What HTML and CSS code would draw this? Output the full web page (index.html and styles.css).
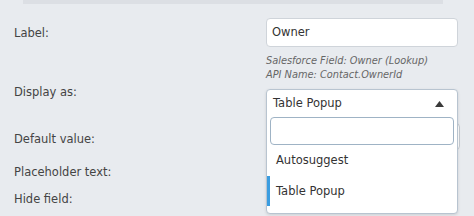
FILE: index.html
```html
<!DOCTYPE html>
<html>
<head>
<meta charset="utf-8">
<link rel="stylesheet" href="styles.css">
</head>
<body>
<div class="topbar"></div>
<div class="form">
  <div class="row r1">
    <div class="lbl">Label:</div>
    <div class="ctl">
      <div class="text-input">Owner</div>
      <div class="help">Salesforce Field: Owner (Lookup)<br>API Name: Contact.OwnerId</div>
    </div>
  </div>
  <div class="row r2">
    <div class="lbl">Display as:</div>
    <div class="ctl">
      <div class="select">
        <div class="panel">
          <div class="sel-head">
            <span>Table Popup</span>
            <svg class="caret" width="9" height="6" viewBox="0 0 9 6"><path d="M0 6 L4.5 0 L9 6 Z" fill="#3a3a3a"/></svg>
          </div>
          <div class="search"></div>
          <div class="opt">Autosuggest</div>
          <div class="opt selected">Table Popup</div>
        </div>
      </div>
    </div>
  </div>
  <div class="row r3">
    <div class="lbl">Default value:</div>
    <div class="ctl"><div class="under-input"></div></div>
  </div>
  <div class="row r4">
    <div class="lbl">Placeholder text:</div>
    <div class="ctl"></div>
  </div>
  <div class="row r5">
    <div class="lbl">Hide field:</div>
    <div class="ctl"></div>
  </div>
</div>
</body>
</html>
```
FILE: styles.css
```css
html, body {
  margin: 0;
  padding: 0;
}
body {
  width: 474px;
  height: 216px;
  overflow: hidden;
  background: #e8ebef;
  font-family: "DejaVu Sans", "Open Sans", sans-serif;
  color: #3b3b3b;
}
.topbar {
  height: 4px;
  margin: 0 31px 0 23px;
  background: #dcdfe4;
}
.form {
  padding: 14px 0 0 14px;
}
.row {
  display: flex;
  align-items: flex-start;
}
.lbl {
  width: 252px;
  flex: none;
  font-size: 11.5px;
  line-height: 16px;
  color: #444;
}
.ctl {
  width: 192px;
  flex: none;
  position: relative;
}
.r1 .lbl {
  padding-top: 7px;
}
.text-input {
  box-sizing: border-box;
  height: 29px;
  background: #fff;
  border: 1px solid #cfd4da;
  border-radius: 4px;
  padding: 0 5px;
  font-size: 11.5px;
  line-height: 27px;
  color: #333;
}
.help {
  margin-top: 7px;
  font-size: 9.8px;
  line-height: 14px;
  font-style: italic;
  color: #666;
}
.r2 {
  margin-top: 2px;
  height: 34px;
}
.select {
  margin-top: 5px;
  height: 29px;
  position: relative;
}
.panel {
  position: absolute;
  top: 0;
  left: 0;
  z-index: 5;
  box-sizing: border-box;
  width: 192px;
  height: 125px;
  background: #fff;
  border: 1px solid #b8c4d0;
  border-radius: 4px;
  box-shadow: 0 1px 3px rgba(0, 0, 0, 0.12);
}
.sel-head {
  height: 24px;
  display: flex;
  align-items: center;
  justify-content: space-between;
  padding: 1px 13px 0 6px;
  font-size: 11.5px;
  color: #333;
}
.caret {
  margin-top: 2px;
}
.search {
  box-sizing: border-box;
  margin: 2px 3px 0 3px;
  height: 28px;
  border: 1px solid #9fb3c5;
  border-radius: 4px;
  background: #fff;
}
.opt {
  height: 30px;
  display: flex;
  align-items: center;
  padding-left: 9px;
  font-size: 11.5px;
  color: #333;
}
.opt:first-of-type {
  margin-top: 3px;
}
.opt.selected {
  margin-top: 1px;
  padding-left: 6px;
  border-left: 3px solid #3b9de0;
}
.r3 {
  margin-top: 13px;
  height: 33px;
}
.under-input {
  margin-top: -8px;
  box-sizing: border-box;
  width: 194px;
  height: 27px;
  border: 1px solid #c4c9cf;
  border-radius: 4px;
  background: #fff;
}
.r4 {
  height: 27px;
}
.r5 {
  height: 20px;
}
```
